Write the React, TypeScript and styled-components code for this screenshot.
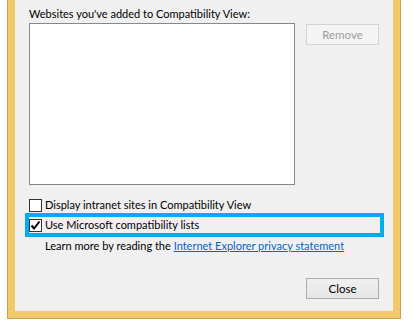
import React from 'react';
import styled, { createGlobalStyle } from 'styled-components';

const GlobalStyle = createGlobalStyle`
  html, body {
    margin: 0;
    padding: 0;
    background: #ffffff;
  }
  body {
    font-family: Lato, "Noto Sans", sans-serif;
    font-size: 11px;
    color: #000;
  }
`;

const Frame = styled.div`
  margin-left: 7px;
  width: 394px;
  box-sizing: border-box;
  border: 1px solid #c9a556;
  border-top: none;
  box-shadow: 0 2px 4px rgba(0, 0, 0, 0.08);
`;

const Chrome = styled.div`
  border: 7px solid #f1c96b;
  border-top: none;
  background: #f0f0f0;
  height: 318px;
  box-sizing: border-box;
  display: flex;
  flex-direction: column;
`;

const Label = styled.div`
  padding: 6px 0 0 14px;
  line-height: 16px;
  height: 16px;
  white-space: nowrap;
`;

const ListRow = styled.div`
  display: flex;
  align-items: flex-start;
  margin: 1px 0 0 14px;
`;

const ListBox = styled.div`
  width: 266px;
  height: 162px;
  box-sizing: border-box;
  background: #fff;
  border: 1px solid #828790;
`;

const Button = styled.button<{ disabled?: boolean }>`
  width: 73px;
  height: 21px;
  box-sizing: border-box;
  padding: 0;
  font: inherit;
  font-size: 11.5px;
  line-height: 18px;
  border: 1px solid ${p => (p.disabled ? '#d4d4d4' : '#acacac')};
  background: ${p => (p.disabled ? '#f4f4f4' : 'linear-gradient(#f0f0f0, #e5e5e5)')};
  color: ${p => (p.disabled ? '#9d9d9d' : '#000')};
`;

const RemoveButton = styled(Button)`
  margin: 1px 0 0 11px;
`;

const CheckRow = styled.label`
  display: flex;
  align-items: center;
  height: 16px;
  line-height: 16px;
  gap: 3px;
  white-space: nowrap;
`;

const PlainCheck = styled(CheckRow)`
  margin: 12px 0 0 14px;
`;

const Highlight = styled.div`
  margin: 0 0 0 10px;
  width: 359px;
  box-sizing: border-box;
  border: 4px solid #00aeef;
`;

const Box = styled.span`
  width: 13px;
  height: 13px;
  box-sizing: border-box;
  border: 1px solid #333;
  background: #fff;
  display: inline-flex;
  align-items: center;
  justify-content: center;
  flex: none;
`;

const LearnMore = styled.div`
  margin: 1px 0 0 30px;
  line-height: 16px;
  white-space: nowrap;
`;

const Link = styled.a`
  color: #0066cc;
  text-decoration: underline;
`;

const Footer = styled.div`
  margin-top: auto;
  display: flex;
  justify-content: flex-end;
  padding: 0 14px 12px 0;
`;

const Check = () => (
  <svg width="11" height="11" viewBox="0 0 11 11">
    <path d="M1.5 5.5 L4 8.5 L9.5 1.5" fill="none" stroke="#000" strokeWidth="2" />
  </svg>
);

export default function App() {
  return (
    <>
      <GlobalStyle />
      <Frame>
        <Chrome>
          <Label>Websites you've added to Compatibility View:</Label>
          <ListRow>
            <ListBox />
            <RemoveButton disabled>Remove</RemoveButton>
          </ListRow>
          <PlainCheck>
            <Box />
            Display intranet sites in Compatibility View
          </PlainCheck>
          <Highlight>
            <CheckRow>
              <Box>
                <Check />
              </Box>
              Use Microsoft compatibility lists
            </CheckRow>
          </Highlight>
          <LearnMore>
            Learn more by reading the <Link href="#">Internet Explorer privacy statement</Link>
          </LearnMore>
          <Footer>
            <Button>Close</Button>
          </Footer>
        </Chrome>
      </Frame>
    </>
  );
}
